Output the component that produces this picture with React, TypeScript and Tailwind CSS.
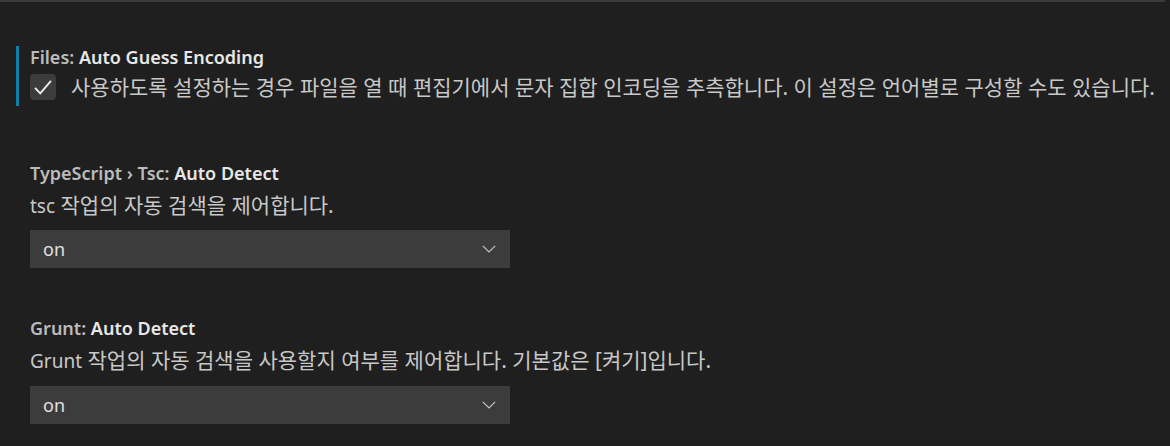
const FONT = { fontFamily: '"Noto Sans", "Noto Sans CJK KR", sans-serif' };

function Title({ category, label }: { category: string; label: string }) {
  return (
    <div className="h-[22px] text-[18px] leading-[22px] font-semibold whitespace-nowrap">
      <span className="text-[#bbbbbb]">{category}</span>
      <span className="text-[#e7e7e7]">{label}</span>
    </div>
  );
}

function Description({ children }: { children: React.ReactNode }) {
  return (
    <div className="h-[22px] text-[21px] leading-[22px] whitespace-nowrap text-[#c8c8c8]">
      {children}
    </div>
  );
}

// latin words inside the korean lines render narrower in the reference
function Latin({ children }: { children: React.ReactNode }) {
  return <span className="text-[19px]">{children}</span>;
}

function Select({ value }: { value: string }) {
  return (
    <div className="flex h-[38px] w-[480px] items-center justify-between bg-[#3c3c3c] pr-[14px] pl-[13px]">
      <span className="text-[18px] text-[#e0e0e0]">{value}</span>
      <svg className="h-[8px] w-[14px]" fill="none" viewBox="0 0 14 8">
        <path d="M0.8 0.8l6.2 6.2 6.2-6.2" stroke="#c5c5c5" strokeWidth="1.2" />
      </svg>
    </div>
  );
}

export default function App() {
  return (
    <div className="h-[446px] w-[1170px] overflow-hidden bg-[#1f1f1f]" style={FONT}>
      <div className="h-[2px] w-[1165px] bg-[#3c3c3c]" />

      <div className="mt-[44px] ml-[16px] h-[60px] border-l-[3px] border-[#0e80a8] pl-[11px]">
        <Title category="Files: " label="Auto Guess Encoding" />
        <div className="mt-[6px] flex h-[26px] items-center gap-[15px]">
          <div className="flex h-[26px] w-[26px] shrink-0 items-center justify-center rounded-[4px] bg-[#3c3c3c]">
            <svg className="h-[22px] w-[22px]" fill="none" viewBox="0 0 16 16">
              <path d="M2.2 8.6l3.8 4L13.8 3.6" stroke="#ececec" strokeWidth="1.4" />
            </svg>
          </div>
          <Description>
            사용하도록 설정하는 경우 파일을 열 때 편집기에서 문자 집합 인코딩을 추측합니다. 이 설정은 언어별로 구성할 수도 있습니다.
          </Description>
        </div>
      </div>

      <div className="mt-[56px] pl-[30px]">
        <Title category="TypeScript › Tsc: " label="Auto Detect" />
        <div className="mt-[10px]">
          <Description>
            <Latin>tsc</Latin> 작업의 자동 검색을 제어합니다.
          </Description>
        </div>
        <div className="mt-[14px]">
          <Select value="on" />
        </div>
      </div>

      <div className="mt-[49px] pl-[30px]">
        <Title category="Grunt: " label="Auto Detect" />
        <div className="mt-[10px]">
          <Description>
            <Latin>Grunt</Latin> 작업의 자동 검색을 사용할지 여부를 제어합니다. 기본값은 [켜기]입니다.
          </Description>
        </div>
        <div className="mt-[15px]">
          <Select value="on" />
        </div>
      </div>
    </div>
  );
}
